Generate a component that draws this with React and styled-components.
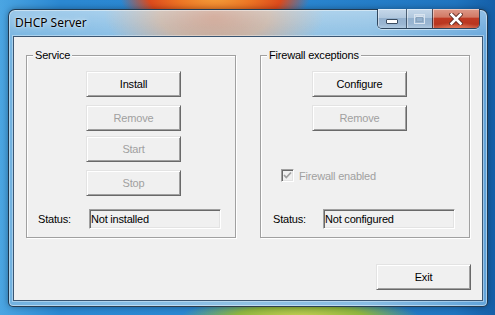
import React from 'react';
import styled, { createGlobalStyle } from 'styled-components';

const GlobalStyle = createGlobalStyle`
  html, body {
    margin: 0;
    padding: 0;
  }
  body {
    font-family: "Liberation Sans", Arial, sans-serif;
    font-size: 11px;
  }
`;

// Desktop wallpaper behind the dialog
const Desktop = styled.div`
  width: 495px;
  height: 315px;
  box-sizing: border-box;
  overflow: hidden;
  padding: 9px 0 0 8px;
  background:
    radial-gradient(ellipse 95px 42px at 215px -4px, #f3a23c 0%, #ec7424 40%, #dc4a1c 70%, rgba(220, 70, 28, 0) 100%),
    radial-gradient(ellipse 120px 22px at 300px 318px, #c9cf55 0%, #8db53e 55%, rgba(120, 170, 60, 0) 100%),
    linear-gradient(90deg, #4ba5e2 0%, #2b88d2 12%, #2a86d0 60%, #1f74bf 92%, #155fa8 100%);
`;

// Aero glass window frame
const Window = styled.div`
  width: 480px;
  height: 298px;
  box-sizing: border-box;
  border: 1px solid rgba(18, 36, 56, 0.85);
  border-radius: 7px 7px 5px 5px;
  padding: 0 4px 5px 4px;
  display: flex;
  flex-direction: column;
  background:
    linear-gradient(180deg, rgba(255, 255, 255, 0.3) 0px, rgba(255, 255, 255, 0.05) 27px, rgba(255, 255, 255, 0) 60px),
    radial-gradient(ellipse 110px 48px at 205px 6px, rgba(200, 150, 130, 1) 0%, rgba(205, 172, 150, 0.85) 50%, rgba(200, 190, 180, 0) 100%),
    linear-gradient(90deg, #72b2e0 0%, #86bde5 25%, #8fc1e4 50%, #88bde3 75%, #62a4da 100%);
  box-shadow: inset 0 0 0 1px rgba(255, 255, 255, 0.45), 0 0 6px rgba(0, 0, 0, 0.35);
`;

const TitleBar = styled.div`
  height: 26px;
  display: flex;
  justify-content: space-between;
  align-items: flex-start;
`;

const Title = styled.div`
  margin: 0 0 0 2px;
  line-height: 26px;
  font-family: "Noto Sans", "Open Sans", sans-serif;
  font-size: 12px;
  color: #000;
  text-shadow: 0 0 6px rgba(255, 255, 255, 0.9), 0 0 2px rgba(255, 255, 255, 0.7);
`;

// Minimize / maximize / close group
const CaptionGroup = styled.div`
  display: flex;
  margin: -1px 3px 0 0;
  height: 19px;
  border: 1px solid rgba(28, 48, 70, 0.85);
  border-top: none;
  border-radius: 0 0 5px 5px;
  overflow: hidden;
  box-shadow: 0 1px 0 rgba(255, 255, 255, 0.5);
`;

const CaptionButton = styled.div`
  width: ${(p) => p.$w}px;
  display: flex;
  align-items: center;
  justify-content: center;
  box-sizing: border-box;
  border-left: ${(p) => (p.$first ? 'none' : '1px solid rgba(28, 48, 70, 0.7)')};
  box-shadow: inset 1px 1px 0 rgba(255, 255, 255, 0.45);
  background: ${(p) =>
    p.$close
      ? 'radial-gradient(ellipse 22px 6px at 50% 100%, rgba(235, 130, 95, 0.8), rgba(235, 130, 95, 0)), linear-gradient(180deg, #dd9a8a 0%, #d27a66 42%, #bf3a24 50%, #b8351f 80%, #c75a43 100%)'
      : 'linear-gradient(180deg, #c6d8ea 0%, #b1c8de 45%, #94b1ce 50%, #9ab6d2 80%, #afc9e0 100%)'};
`;

const Client = styled.div`
  flex: 1;
  background: #f0f0f0;
  border: 1px solid #3b5672;
  box-shadow: 0 0 0 1px rgba(255, 255, 255, 0.35);
  display: flex;
  flex-direction: column;
`;

const GroupRow = styled.div`
  display: flex;
  gap: 24px;
  padding: 18px 0 0 12px;
`;

const Group = styled.div`
  width: 210px;
  height: 183px;
  box-sizing: border-box;
  border: 1px solid #a0a0a0;
  box-shadow: 1px 1px 0 #fff, inset 1px 1px 0 #fff;
  display: flex;
  flex-direction: column;
  align-items: flex-start;
`;

const Legend = styled.div`
  margin: -7px 0 0 6px;
  padding: 0 2px;
  height: 13px;
  line-height: 13px;
  background: #f0f0f0;
  color: #000;
  letter-spacing: -0.2px;
`;

const Button = styled.div`
  width: 95px;
  height: 26px;
  box-sizing: border-box;
  margin: ${(p) => p.$top || 0}px 0 0 ${(p) => p.$left || 0}px;
  display: flex;
  align-items: center;
  justify-content: center;
  background: #f0f0f0;
  border: 1px solid;
  border-color: #e3e3e3 #696969 #696969 #e3e3e3;
  box-shadow: inset 1px 1px 0 #fff, inset -1px -1px 0 #a0a0a0;
  color: ${(p) => (p.$disabled ? '#a0a0a0' : '#000')};
  letter-spacing: -0.2px;
`;

const CheckRow = styled.div`
  display: flex;
  align-items: center;
  gap: 5px;
  height: 13px;
  margin: ${(p) => p.$top}px 0 0 20px;
  color: #a0a0a0;
  letter-spacing: -0.2px;
`;

const CheckBox = styled.span`
  width: 13px;
  height: 13px;
  box-sizing: border-box;
  border: 1px solid;
  border-color: #a0a0a0 #fff #fff #a0a0a0;
  box-shadow: inset 1px 1px 0 #696969, inset -1px -1px 0 #e3e3e3;
  background: #f0f0f0;
  display: flex;
  align-items: center;
  justify-content: center;
`;

const StatusRow = styled.div`
  display: flex;
  align-items: center;
  margin-top: ${(p) => p.$top}px;
  padding-left: ${(p) => p.$pad}px;
`;

const StatusLabel = styled.span`
  width: ${(p) => 62 - p.$pad}px;
  color: #000;
  letter-spacing: -0.2px;
`;

const StatusField = styled.div`
  width: 132px;
  height: 20px;
  box-sizing: border-box;
  padding: 0 0 0 1px;
  display: flex;
  align-items: center;
  border: 1px solid;
  border-color: #a0a0a0 #fff #fff #a0a0a0;
  box-shadow: inset 1px 1px 0 #696969, inset -1px -1px 0 #e3e3e3;
  background: #f0f0f0;
  color: #000;
  letter-spacing: -0.2px;
`;

const Footer = styled.div`
  display: flex;
  justify-content: flex-end;
  padding: 26px 11px 0 0;
`;

const MinIcon = () => (
  <svg width="12" height="6" viewBox="0 0 12 6" style={{ marginTop: 6 }}>
    <rect x="0.5" y="0.5" width="11" height="4" rx="0.5" fill="#fff" stroke="#3a4c60" />
  </svg>
);

const MaxIcon = () => (
  <svg width="11" height="10" viewBox="0 0 11 10">
    <rect x="0.5" y="0.5" width="10" height="9" fill="none" stroke="#d9e4ef" />
    <rect x="1.5" y="1.5" width="8" height="2" fill="#d9e4ef" />
    <rect x="2.5" y="3.5" width="6" height="4" fill="none" stroke="#8aa3bc" />
  </svg>
);

const CloseIcon = () => (
  <svg width="14" height="12" viewBox="0 0 14 12">
    <path d="M2.5 1.5 L11.5 10.5 M11.5 1.5 L2.5 10.5" stroke="#5a2a22" strokeWidth="4.4" strokeLinecap="square" />
    <path d="M2.5 1.5 L11.5 10.5 M11.5 1.5 L2.5 10.5" stroke="#fff" strokeWidth="2.6" strokeLinecap="square" />
  </svg>
);

const CheckMark = () => (
  <svg width="9" height="9" viewBox="0 0 9 9">
    <path d="M1 4 L3.3 6.5 L8 1.5" fill="none" stroke="#a0a0a0" strokeWidth="1.8" />
  </svg>
);

const App = () => {
  return (
    <Desktop>
      <GlobalStyle />
      <Window>
        <TitleBar>
          <Title>DHCP Server</Title>
          <CaptionGroup>
            <CaptionButton $w={28} $first>
              <MinIcon />
            </CaptionButton>
            <CaptionButton $w={26}>
              <MaxIcon />
            </CaptionButton>
            <CaptionButton $w={47} $close>
              <CloseIcon />
            </CaptionButton>
          </CaptionGroup>
        </TitleBar>
        <Client>
          <GroupRow>
            {/* Service section */}
            <Group>
              <Legend>Service</Legend>
              <Button $top={9} $left={59}>Install</Button>
              <Button $top={8} $left={59} $disabled>Remove</Button>
              <Button $top={5} $left={59} $disabled>Start</Button>
              <Button $top={8} $left={59} $disabled>Stop</Button>
              <StatusRow $top={13} $pad={11}>
                <StatusLabel $pad={11}>Status:</StatusLabel>
                <StatusField>Not installed</StatusField>
              </StatusRow>
            </Group>
            {/* Firewall section */}
            <Group>
              <Legend>Firewall exceptions</Legend>
              <Button $top={9} $left={51}>Configure</Button>
              <Button $top={8} $left={51} $disabled>Remove</Button>
              <CheckRow $top={38}>
                <CheckBox>
                  <CheckMark />
                </CheckBox>
                Firewall enabled
              </CheckRow>
              <StatusRow $top={27} $pad={12}>
                <StatusLabel $pad={12}>Status:</StatusLabel>
                <StatusField>Not configured</StatusField>
              </StatusRow>
            </Group>
          </GroupRow>
          <Footer>
            <Button>Exit</Button>
          </Footer>
        </Client>
      </Window>
    </Desktop>
  );
};

export default App;
